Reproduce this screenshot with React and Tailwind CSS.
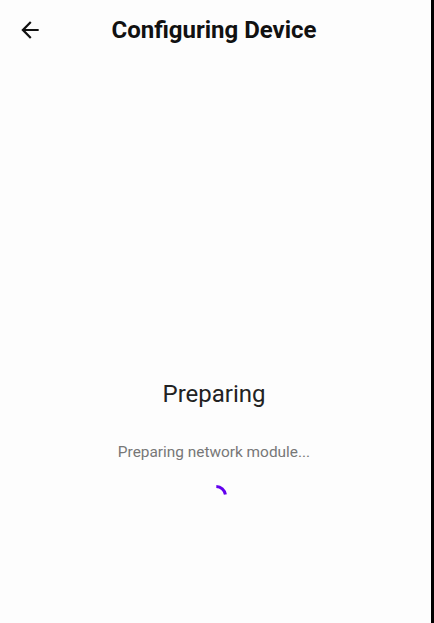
export default function App() {
  return (
    <div className="flex h-[623px] w-full bg-black" style={{ fontFamily: "Roboto, 'Noto Sans', sans-serif" }}>
      <div className="flex flex-1 flex-col bg-[#fdfdfd] mr-[3px]">
        <div className="flex h-[60px] items-center pl-[17px] pr-4">
          <svg width="26" height="26" viewBox="0 0 24 24" className="shrink-0 text-[#111]">
            <path d="M20 11H7.83l5.59-5.59L12 4l-8 8 8 8 1.41-1.41L7.83 13H20v-2z" fill="currentColor" />
          </svg>
          <div className="flex-1 text-center text-[24px] font-bold text-[#111] pr-[30px] leading-[32px]">Configuring Device</div>
        </div>
        <div className="flex flex-col items-center pt-[318px] pr-[3px]">
          <div className="text-[24px] leading-[32px] text-[#222]">Preparing</div>
          <div className="mt-[32px] text-[15.4px] leading-[20px] text-[#777]">Preparing network module...</div>
          <svg width="24" height="24" viewBox="0 0 24 24" className="mt-[22px] ml-[3px]">
            <circle cx="12" cy="12" r="9.5" fill="none" stroke="#6200ee" strokeWidth="3" strokeLinecap="butt" strokeDasharray="13 60" transform="rotate(-88 12 12)" />
          </svg>
        </div>
      </div>
    </div>
  );
}
